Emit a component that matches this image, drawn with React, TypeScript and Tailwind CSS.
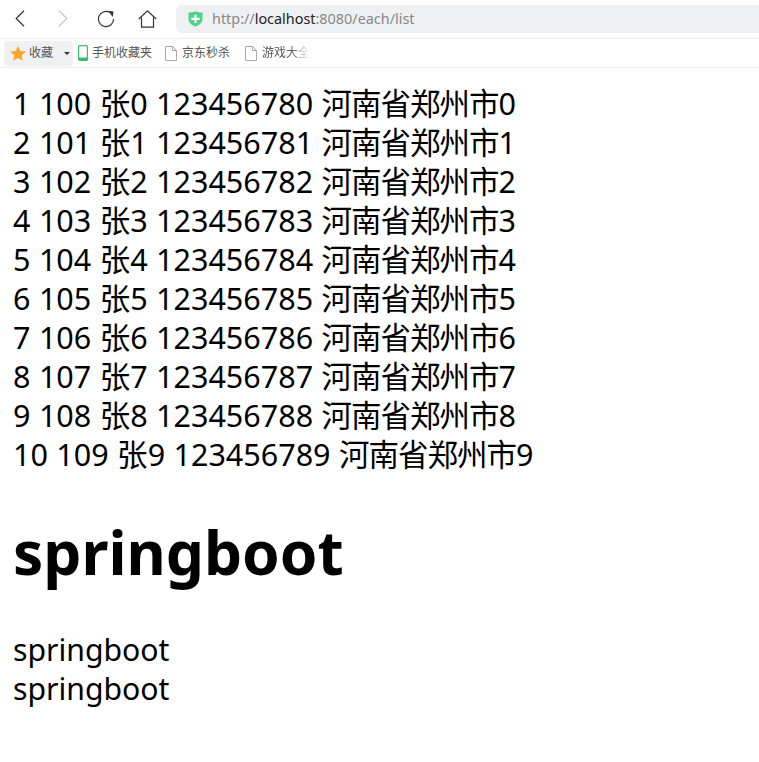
const FONT = "font-['Noto_Sans','Noto_Sans_CJK_SC',sans-serif]";

const rows = [0, 1, 2, 3, 4, 5, 6, 7, 8, 9];

function BackIcon({ color, flip }: { color: string; flip?: boolean }) {
  return (
    <svg width="10" height="17" viewBox="0 0 10 17" fill="none" stroke={color} strokeWidth="1.200" className={flip ? "-scale-x-100" : ""}>
      <path d="M9 .8 1.200 8.500 9 16.200" />
    </svg>
  );
}

function ReloadIcon() {
  return (
    <svg width="18" height="18" viewBox="0 0 18 18" fill="none">
      <path d="M12.500 2.300A7.600 7.600 0 1 0 16.600 9" stroke="#333" strokeWidth="1.200" />
      <path d="M11 .8 16.500 1.500 15.800 7z" fill="#333" />
    </svg>
  );
}

function HomeIcon() {
  return (
    <svg width="19" height="18" viewBox="0 0 19 18" fill="none" stroke="#333" strokeWidth="1.200">
      <path d="M.8 9 9.500 .9 18.200 9M3.500 7.500v9.700h12V7.500" />
    </svg>
  );
}

function ShieldIcon() {
  return (
    <svg width="15" height="16" viewBox="0 0 15 16">
      <path d="M.5 1.500C3 1.500 5.500 1 7.500.5c2 .5 4.500 1 7 1V8c0 3.500-3 6.200-7 7.500C3.500 14.200.5 11.500.5 8z" fill="#4fd28a" />
      <path d="M6.400 3.800h2.200v3h3V9h-3v3H6.400V9h-3V6.800h3z" fill="#fff" />
    </svg>
  );
}

function StarIcon() {
  return (
    <svg width="16" height="15" viewBox="0 0 16 15">
      <path d="M8 0l2.300 5 5.500.6-4.100 3.700 1.200 5.400L8 12l-4.900 2.700 1.200-5.400L.2 5.600 5.700 5z" fill="#fba42a" />
    </svg>
  );
}

function PhoneIcon() {
  return (
    <svg width="10" height="16" viewBox="0 0 10 16">
      <rect x="0.600" y="0.600" width="8.800" height="14.800" rx="1" fill="none" stroke="#3dbb6c" strokeWidth="1.200" />
      <rect x="1" y="12.500" width="8" height="3" fill="#3dbb6c" />
    </svg>
  );
}

function FileIcon() {
  return (
    <svg width="12" height="15" viewBox="0 0 12 15" fill="none" stroke="#aaa">
      <path d="M.5.500h7l4 4v10H.500zM7.500.5v4h4" />
    </svg>
  );
}

export default function App() {
  return (
    <div className={`${FONT} min-h-[762px] bg-white text-black`}>
      <div className="flex h-[39px] items-center border-b border-[#eeeeee] pb-[1px]">
        <div className="flex w-[176px] items-center pl-[15px]">
          <BackIcon color="#333" />
          <div className="ml-[33px]">
            <BackIcon color="#c8c8c8" flip />
          </div>
          <div className="ml-[29px]">
            <ReloadIcon />
          </div>
          <div className="ml-[23px]">
            <HomeIcon />
          </div>
        </div>
        <div className="flex h-[28px] flex-1 items-center rounded-l-md bg-[#eff0f2] pl-[12px] text-[14.400px]">
          <ShieldIcon />
          <span className="ml-[9px] text-[#888]">
            http://<span className="text-[#222]">localhost</span>:8080/each/list
          </span>
        </div>
      </div>
      <div className="flex h-[29px] items-center border-b border-[#eeeeee] pl-[4px] text-xs text-[#555]">
        <div className="flex h-[25px] w-[69px] items-center rounded-sm bg-[#eff0f2] pl-[6px]">
          <StarIcon />
          <span className="ml-[3px]">收藏</span>
          <span className="ml-[11px] h-0 w-0 border-x-[3px] border-t-[3px] border-x-transparent border-t-[#333]" />
        </div>
        <div className="ml-[5px]">
          <PhoneIcon />
        </div>
        <span className="ml-[4px]">手机收藏夹</span>
        <div className="ml-[13px]">
          <FileIcon />
        </div>
        <span className="ml-[5px]">京东秒杀</span>
        <div className="ml-[15px]">
          <FileIcon />
        </div>
        <span className="ml-[5px] [mask-image:linear-gradient(to_right,black_60%,transparent)]">游戏大全</span>
      </div>
      <div className="px-[13px] pt-[16px]">
        <div className="text-[30.500px] leading-[39px] [word-spacing:0.500px]">
          {rows.map((n) => (
            <div key={n}>
              {n + 1} {100 + n} 张{n} {123456780 + n} <span className="tracking-[-1px]">河南省郑州市</span>{n}
            </div>
          ))}
        </div>
        <h1 className="mt-[34px] text-[60.400px] font-bold leading-[87px]">springboot</h1>
        <div className="mt-[35px] text-[30.200px] leading-[39px]">
          <div>springboot</div>
          <div>springboot</div>
        </div>
      </div>
    </div>
  );
}
